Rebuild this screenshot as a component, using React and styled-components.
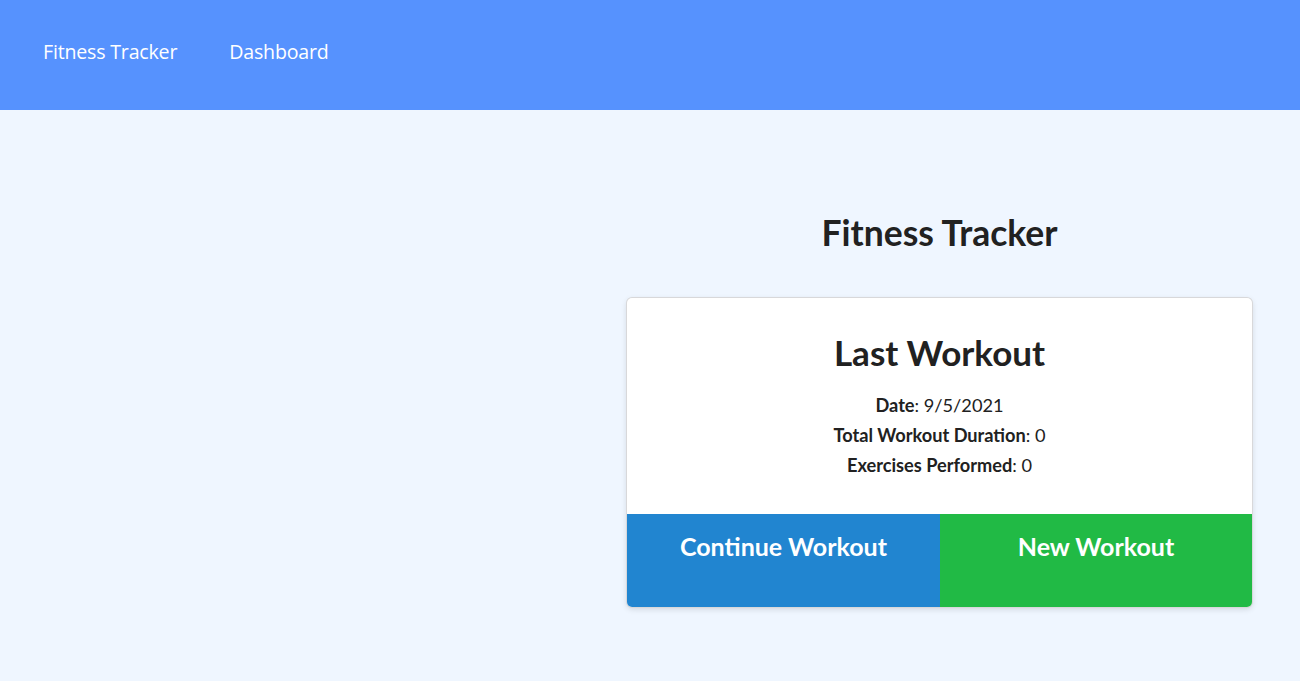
import React from "react";
import styled, { createGlobalStyle } from "styled-components";

const Global = createGlobalStyle`
  html, body { margin: 0; padding: 0; }
  body {
    background: #eff6ff;
    font-family: Lato, "Helvetica Neue", Arial, sans-serif;
    color: #212121;
    min-height: 681px;
  }
`;

const Nav = styled.nav`
  height: 110px;
  background: #5692fe;
  display: flex;
  align-items: center;
  padding: 0 0 8px 43px;
  box-sizing: border-box;
  gap: 52px;
`;

const NavLink = styled.a`
  color: #ffffff;
  font-family: "Open Sans", "Noto Sans", sans-serif;
  font-size: 19.6px;
  text-decoration: none;
  letter-spacing: -0.2px;
`;

const Main = styled.main`
  display: grid;
  grid-template-columns: 1fr 625px;
  padding: 101px 48px 0 48px;
`;

const Column = styled.section`
  display: flex;
  flex-direction: column;
  align-items: stretch;
`;

const Title = styled.h1`
  margin: 0 0 43px;
  text-align: center;
  font-size: 35.5px;
  font-weight: 700;
  line-height: 44px;
  color: #212121;
`;

const Card = styled.div`
  background: #ffffff;
  border-radius: 5px;
  box-shadow: 0 0 0 1px #d8d8da, 0 2px 6px 0 rgba(0, 0, 0, 0.14);
  overflow: hidden;
  display: flex;
  flex-direction: column;
`;

const CardBody = styled.div`
  padding: 33px 16px 34px;
  text-align: center;
`;

const CardHeading = styled.h2`
  margin: 0 0 17px;
  font-size: 35px;
  font-weight: 700;
  line-height: 42px;
`;

const Stat = styled.p`
  margin: 0;
  font-size: 18.2px;
  line-height: 30px;
  font-weight: 400;
`;

const Label = styled.strong`
  font-weight: 700;
`;

const Actions = styled.div`
  display: grid;
  grid-template-columns: 313px 1fr;
`;

const ActionButton = styled.button`
  height: 93px;
  border: none;
  margin: 0;
  padding: 17px 0 0;
  display: flex;
  justify-content: center;
  align-items: flex-start;
  background: ${(p) => p.$bg};
  color: #ffffff;
  font-family: Lato, sans-serif;
  font-size: 25px;
  font-weight: 700;
  cursor: pointer;
`;

export default function App() {
  return (
    <>
      <Global />
      <Nav>
        <NavLink href="#">Fitness Tracker</NavLink>
        <NavLink href="#">Dashboard</NavLink>
      </Nav>
      <Main>
        <Column />
        <Column>
          <Title>Fitness Tracker</Title>
          <Card>
            <CardBody>
              <CardHeading>Last Workout</CardHeading>
              <Stat><Label>Date</Label>: 9/5/2021</Stat>
              <Stat><Label>Total Workout Duration</Label>: 0</Stat>
              <Stat><Label>Exercises Performed</Label>: 0</Stat>
            </CardBody>
            <Actions>
              <ActionButton $bg="#2185d0">Continue Workout</ActionButton>
              <ActionButton $bg="#21ba45">New Workout</ActionButton>
            </Actions>
          </Card>
        </Column>
      </Main>
    </>
  );
}
